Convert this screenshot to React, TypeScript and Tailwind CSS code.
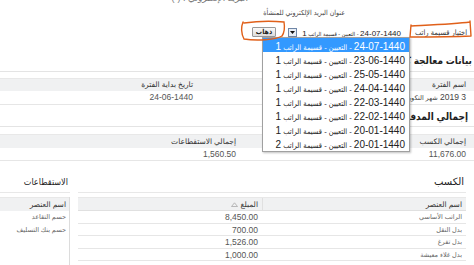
import React from "react";

const items = [
  ["24-07-1440", "1"],
  ["23-06-1440", "1"],
  ["25-05-1440", "1"],
  ["24-04-1440", "1"],
  ["22-03-1440", "1"],
  ["22-02-1440", "1"],
  ["20-01-1440", "1"],
  ["20-01-1440", "2"],
];

const earnings = [
  ["الراتب الأساسي", "8,450.00"],
  ["بدل النقل", "700.00"],
  ["بدل تفرغ", "1,526.00"],
  ["بدل غلاء معيشة", "1,000.00"],
];

const cond = "font-[Liberation_Sans,DejaVu_Sans_Condensed,DejaVu_Sans,sans-serif]";

export default function App() {
  return (
    <div
      dir="rtl"
      className="relative w-[474px] h-[265px] overflow-hidden bg-white text-[#333] font-[Liberation_Sans,DejaVu_Sans,sans-serif]"
    >
      {/* cut-off top text */}
      <div className="h-[5px] overflow-hidden pr-[226px]">
        <div className="-mt-[8px] text-[9px] leading-[12px] text-[#777] whitespace-nowrap">البريد الإلكتروني : (-)</div>
      </div>

      {/* email title */}
      <div className={`h-[15px] pr-[129px] text-[7px] leading-[15px] text-[#444] whitespace-nowrap ${cond}`}>
        عنوان البريد الإلكتروني للمنشأة
      </div>

      {/* control row */}
      <div className="mt-[7px] h-[10px] flex items-center pr-[4px]">
        <div className={`w-[58px] h-[11px] text-[7.5px] leading-[11px] text-[#333] text-center whitespace-nowrap ${cond}`}>
          اختيار قسيمة راتب
        </div>
        <div className="mr-[10px] w-[114px] h-[10px] flex items-center gap-[1px] bg-white">
          <span className={`flex-1 min-w-0 overflow-hidden leading-[10px] text-[#222] whitespace-nowrap pr-[1px] ${cond}`}>
            <span className="text-[8px]">24-07-1440</span>
            <span className="text-[5.5px]"> - التعيين - قسيمة الراتب </span>
            <span className="text-[8px]">1</span>
          </span>
          <span className="shrink-0 w-[9px] h-[9px] border border-[#6f86a6] bg-[#e8eef6] flex items-center justify-center">
            <svg width="5" height="3" viewBox="0 0 5 3">
              <path d="M0 0 L5 0 L2.5 3 Z" fill="#111" />
            </svg>
          </span>
        </div>
        <div className={`mr-[12px] shrink-0 w-[24px] h-[10px] border border-[#999] rounded-[1px] bg-gradient-to-b from-[#fafafa] to-[#dcdcdc] text-[7px] font-bold leading-[8px] text-center text-[#222] ${cond}`}>
          ذهاب
        </div>
      </div>

      {/* section 1 */}
      <div className={`mt-[18px] h-[17px] border-b border-[#e4e4e4] pr-[2px] text-[10px] font-bold leading-[12px] text-[#222] whitespace-nowrap ${cond}`}>
        بيانات معالجة كشف الراتب
      </div>
      <div className="mt-[6px] h-[13px] bg-[#f0f1f2] border-t border-[#e8e8e8] flex text-[7.5px] leading-[12px] text-[#333]">
        <div className="w-[281px] pr-[8px] text-right">اسم الفترة</div>
        <div className="flex-1 text-right">تاريخ بداية الفترة</div>
      </div>
      <div className="h-[14px] border-b border-[#e6e6e6] flex text-[8.5px] leading-[13px] text-[#555]">
        <div className="w-[281px] pr-[8px] text-right text-[#444] whitespace-nowrap">
          3 2019 <span className="text-[6.5px]">شهر التكوين</span>
        </div>
        <div className="flex-1 text-right">24-06-1440</div>
      </div>

      {/* section 2 */}
      <div className={`mt-[3px] h-[19px] border-b border-[#e4e4e4] pr-[6px] text-[10px] font-bold leading-[18px] text-[#222] whitespace-nowrap ${cond}`}>
        إجمالي المدفوعات
      </div>
      <div className="mt-[7px] h-[14px] bg-[#f0f1f2] border-t border-[#e8e8e8] flex text-[7.5px] leading-[13px] text-[#333]">
        <div className="w-[238px] pr-[8px] text-right">إجمالي الكسب</div>
        <div className="flex-1 text-right">إجمالي الاستقطاعات</div>
      </div>
      <div className="h-[13px] border-b border-[#e6e6e6] flex text-[8.5px] leading-[13px] text-[#555]">
        <div className="w-[238px] pr-[8px] text-right">11,676.00</div>
        <div className="flex-1 text-right">1,560.50</div>
      </div>

      {/* lower sections */}
      <div className="mt-[15px] flex gap-[8px] pr-[8px]">
        {/* earnings */}
        <div className="w-[388px]">
          <div className="h-[17px] border-b border-[#e8e8e8] text-[10px] leading-[12px] text-[#222] pr-[2px]">الكسب</div>
          <div className="mt-[4px] h-[14px] bg-[#f0f1f2] border-t border-[#e8e8e8] border-b border-b-[#e0e0e0] flex text-[7.5px] leading-[13px] text-[#333]">
            <div className="w-[204px] pr-[4px] text-right border-l border-[#e0e0e0]">اسم العنصر</div>
            <div className="flex-1 pr-[4px] flex items-center gap-[3px]">
              <span>المبلغ</span>
              <svg width="7" height="5" viewBox="0 0 7 5">
                <path d="M0.5 4.5 L3.5 0.8 L6.5 4.5 Z" fill="none" stroke="#aaa" strokeWidth="0.8" />
              </svg>
            </div>
          </div>
          {earnings.map(([n, v]) => (
            <div key={n} className="h-[12.5px] border-b border-[#e6e6e6] flex text-[8.5px] leading-[12px] text-[#555]">
              <div className="w-[204px] pr-[4px] text-right text-[6.5px] text-[#666]">{n}</div>
              <div className="flex-1 pr-[4px] text-right">{v}</div>
            </div>
          ))}
        </div>
        {/* deductions */}
        <div className="flex-1">
          <div className={`h-[17px] border-b border-[#e8e8e8] text-[9px] leading-[12px] text-[#222] pr-[2px] whitespace-nowrap ${cond}`}>
            الاستقطاعات
          </div>
          <div className="mt-[4px] border-r border-[#dcdcdc] h-[80px]">
            <div className="h-[14px] bg-[#f0f1f2] border-t border-[#e8e8e8] text-[7.5px] leading-[13px] text-[#333] pr-[3px]">
              اسم العنصر
            </div>
            <div className="h-[12.5px] text-[6.5px] leading-[12px] text-[#666] pr-[3px] whitespace-nowrap">حسم التقاعد</div>
            <div className="h-[12.5px] text-[6.5px] leading-[12px] text-[#666] pr-[3px] whitespace-nowrap">حسم بنك التسليف</div>
          </div>
        </div>
      </div>

      {/* open dropdown list */}
      <div className="absolute left-[262px] top-[37px] w-[148px] h-[115px] bg-white border border-[#a0a0a0] shadow-[1px_1px_2px_rgba(0,0,0,0.25)] flex flex-col overflow-hidden">
        {items.map(([d, n], i) => (
          <div
            key={i}
            className={`h-[14px] pr-[4px] leading-[14px] whitespace-nowrap ${cond} ${
              i === 0 ? "bg-[#3399ff] text-white" : "text-[#222]"
            }`}
          >
            <span className="text-[10px]">{d}</span>
            <span className="text-[7.5px]"> - التعيين - قسيمة الراتب </span>
            <span className="text-[10px]">{n}</span>
          </div>
        ))}
      </div>

      {/* orange annotations */}
      <svg className="absolute left-0 top-0 pointer-events-none" width="474" height="265">
        <path
          d="M411 26 C 430 25, 455 24, 470 22 M470 21 L 471 36 M 471 36 C 450 37, 430 37, 410 37 M 410 37 L 411 25"
          fill="none"
          stroke="#e0601a"
          strokeWidth="1.4"
          strokeLinecap="round"
        />
        <path
          d="M244 23 C 258 21, 274 21, 284 22 C 285 28, 284 33, 282 36 M 282 36 C 276 40, 256 41, 244 39 C 241 33, 241 27, 243 22"
          fill="none"
          stroke="#e0601a"
          strokeWidth="1.4"
          strokeLinecap="round"
        />
      </svg>
    </div>
  );
}
